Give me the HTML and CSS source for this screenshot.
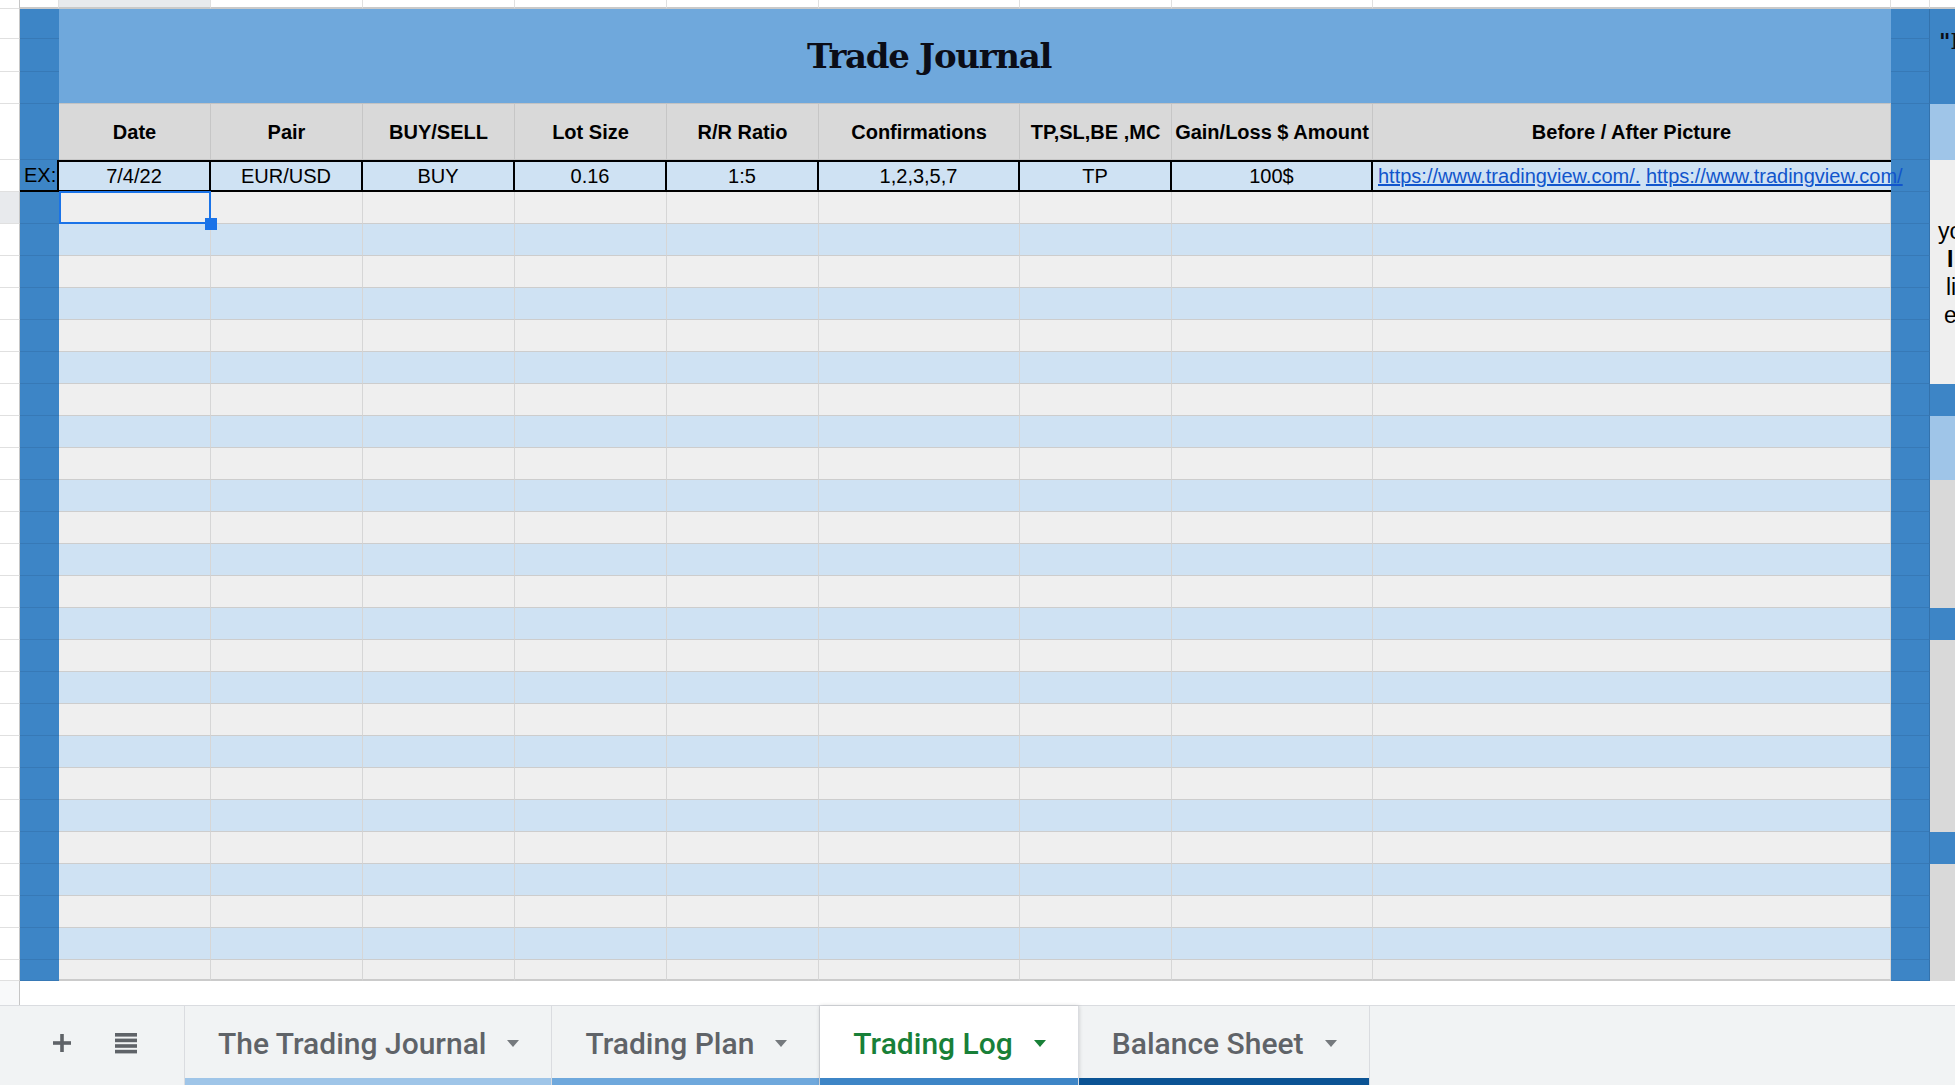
FILE: index.html
```html
<!DOCTYPE html>
<html lang="en">
<head>
<meta charset="utf-8">
<title>Trade Journal</title>
<link rel="stylesheet" href="styles.css">
</head>
<body>
<div class="sheet">
  <div class="main">
    <div class="row top"><div class="s"></div><div></div><div class="colsel"></div><div></div><div></div><div></div><div></div><div></div><div></div><div></div><div></div><div></div></div>

    <div class="row title">
      <div class="s"></div><div class="bl"></div><div class="tt">Trade Journal</div><div class="bl br"></div>
      <div class="s"></div><div class="bl"></div><div class="bl br"></div>
      <div class="s"></div><div class="bl"></div><div class="bl br"></div>
    </div>

    <div class="row head">
      <div class="s"></div><div class="bl"></div>
      <div class="h">Date</div><div class="h">Pair</div><div class="h">BUY/SELL</div><div class="h">Lot Size</div><div class="h">R/R Ratio</div><div class="h">Confirmations</div><div class="h">TP,SL,BE ,MC</div><div class="h">Gain/Loss $ Amount</div><div class="h">Before / After Picture</div>
      <div class="bl br"></div>
    </div>

    <div class="row ex">
      <div class="s"></div><div class="bl lbl">EX:</div>
      <div class="d">7/4/22</div><div class="d">EUR/USD</div><div class="d">BUY</div><div class="d">0.16</div><div class="d">1:5</div><div class="d">1,2,3,5,7</div><div class="d">TP</div><div class="d">100$</div>
      <div class="d link"><a href="#">https://www.tradingview.com/.</a>&nbsp;<a href="#">https://www.tradingview.com/</a></div>
      <div class="bl br"></div>
    </div>

    <div class="row r g"><div class="s on"></div><div class="bl"></div><div class="cur"><span class="selbox"></span><span class="handle"></span></div><div></div><div></div><div></div><div></div><div></div><div></div><div></div><div></div><div class="bl br"></div></div>
    <div class="row r b"><div class="s"></div><div class="bl"></div><div></div><div></div><div></div><div></div><div></div><div></div><div></div><div></div><div></div><div class="bl br"></div></div>
    <div class="row r g"><div class="s"></div><div class="bl"></div><div></div><div></div><div></div><div></div><div></div><div></div><div></div><div></div><div></div><div class="bl br"></div></div>
    <div class="row r b"><div class="s"></div><div class="bl"></div><div></div><div></div><div></div><div></div><div></div><div></div><div></div><div></div><div></div><div class="bl br"></div></div>
    <div class="row r g"><div class="s"></div><div class="bl"></div><div></div><div></div><div></div><div></div><div></div><div></div><div></div><div></div><div></div><div class="bl br"></div></div>
    <div class="row r b"><div class="s"></div><div class="bl"></div><div></div><div></div><div></div><div></div><div></div><div></div><div></div><div></div><div></div><div class="bl br"></div></div>
    <div class="row r g"><div class="s"></div><div class="bl"></div><div></div><div></div><div></div><div></div><div></div><div></div><div></div><div></div><div></div><div class="bl br"></div></div>
    <div class="row r b"><div class="s"></div><div class="bl"></div><div></div><div></div><div></div><div></div><div></div><div></div><div></div><div></div><div></div><div class="bl br"></div></div>
    <div class="row r g"><div class="s"></div><div class="bl"></div><div></div><div></div><div></div><div></div><div></div><div></div><div></div><div></div><div></div><div class="bl br"></div></div>
    <div class="row r b"><div class="s"></div><div class="bl"></div><div></div><div></div><div></div><div></div><div></div><div></div><div></div><div></div><div></div><div class="bl br"></div></div>
    <div class="row r g"><div class="s"></div><div class="bl"></div><div></div><div></div><div></div><div></div><div></div><div></div><div></div><div></div><div></div><div class="bl br"></div></div>
    <div class="row r b"><div class="s"></div><div class="bl"></div><div></div><div></div><div></div><div></div><div></div><div></div><div></div><div></div><div></div><div class="bl br"></div></div>
    <div class="row r g"><div class="s"></div><div class="bl"></div><div></div><div></div><div></div><div></div><div></div><div></div><div></div><div></div><div></div><div class="bl br"></div></div>
    <div class="row r b"><div class="s"></div><div class="bl"></div><div></div><div></div><div></div><div></div><div></div><div></div><div></div><div></div><div></div><div class="bl br"></div></div>
    <div class="row r g"><div class="s"></div><div class="bl"></div><div></div><div></div><div></div><div></div><div></div><div></div><div></div><div></div><div></div><div class="bl br"></div></div>
    <div class="row r b"><div class="s"></div><div class="bl"></div><div></div><div></div><div></div><div></div><div></div><div></div><div></div><div></div><div></div><div class="bl br"></div></div>
    <div class="row r g"><div class="s"></div><div class="bl"></div><div></div><div></div><div></div><div></div><div></div><div></div><div></div><div></div><div></div><div class="bl br"></div></div>
    <div class="row r b"><div class="s"></div><div class="bl"></div><div></div><div></div><div></div><div></div><div></div><div></div><div></div><div></div><div></div><div class="bl br"></div></div>
    <div class="row r g"><div class="s"></div><div class="bl"></div><div></div><div></div><div></div><div></div><div></div><div></div><div></div><div></div><div></div><div class="bl br"></div></div>
    <div class="row r b"><div class="s"></div><div class="bl"></div><div></div><div></div><div></div><div></div><div></div><div></div><div></div><div></div><div></div><div class="bl br"></div></div>
    <div class="row r g"><div class="s"></div><div class="bl"></div><div></div><div></div><div></div><div></div><div></div><div></div><div></div><div></div><div></div><div class="bl br"></div></div>
    <div class="row r b"><div class="s"></div><div class="bl"></div><div></div><div></div><div></div><div></div><div></div><div></div><div></div><div></div><div></div><div class="bl br"></div></div>
    <div class="row r g"><div class="s"></div><div class="bl"></div><div></div><div></div><div></div><div></div><div></div><div></div><div></div><div></div><div></div><div class="bl br"></div></div>
    <div class="row r b"><div class="s"></div><div class="bl"></div><div></div><div></div><div></div><div></div><div></div><div></div><div></div><div></div><div></div><div class="bl br"></div></div>
    <div class="row last g"><div class="s"></div><div class="bl"></div><div></div><div></div><div></div><div></div><div></div><div></div><div></div><div></div><div></div><div class="bl br"></div></div>
  </div>

  <div class="side">
    <div class="sd-top"></div>
    <div class="sd-title">"I</div>
    <div class="sd-lb sd-h56"></div>
    <div class="sd-note">
      <div class="n1">you</div>
      <div class="n2">I</div>
      <div class="n3">like</div>
      <div class="n4">every</div>
    </div>
    <div class="sd-blue"></div>
    <div class="sd-lb sd-h64"></div>
    <div class="sd-gray sd-h128"></div>
    <div class="sd-blue"></div>
    <div class="sd-gray sd-h192"></div>
    <div class="sd-blue"></div>
    <div class="sd-gray sd-rest"></div>
  </div>
</div>

<div class="gap"><div class="s"></div></div>

<div class="tabbar">
  <div class="tools">
    <svg class="ico" width="20" height="20" viewBox="0 0 20 20" aria-hidden="true"><rect x="8.2" y="1" width="3.6" height="18" fill="#5f6368"/><rect x="1" y="8.2" width="18" height="3.6" fill="#5f6368"/></svg>
    <svg class="ico" width="22" height="22" viewBox="0 0 22 22" aria-hidden="true"><rect x="0" y="1" width="22" height="3.6" fill="#5f6368"/><rect x="0" y="6.6" width="22" height="3.6" fill="#5f6368"/><rect x="0" y="12.2" width="22" height="3.6" fill="#5f6368"/><rect x="0" y="17.8" width="22" height="3.6" fill="#5f6368"/></svg>
  </div>
  <div class="tab t1"><div class="lab"><span>The Trading Journal</span><i class="arr"></i></div><div class="bar"></div></div>
  <div class="tab t2"><div class="lab"><span>Trading Plan</span><i class="arr"></i></div><div class="bar"></div></div>
  <div class="tab t3 on"><div class="lab"><span>Trading Log</span><i class="arr"></i></div><div class="bar"></div></div>
  <div class="tab t4"><div class="lab"><span>Balance Sheet</span><i class="arr"></i></div><div class="bar"></div></div>
</div>
</body>
</html>
```

FILE: styles.css
```css
* { box-sizing: border-box; }
html, body { margin: 0; padding: 0; }
body {
  width: 1955px;
  height: 1085px;
  overflow: hidden;
  background: #fff;
  font-family: "Liberation Sans", Arial, sans-serif;
  color: #000;
}

.sheet { display: flex; height: 981px; }
.main { width: 1930px; display: flex; flex-direction: column; flex: none; }

.row {
  display: grid;
  grid-template-columns: 20px 39px 152px 152px 152px 152px 152px 201px 152px 201px 518px 39px;
}
.row > div {
  border-right: 1px solid #d6d6d6;
  border-bottom: 1px solid #cdcdcd;
}
.row > .s {
  background: #fff;
  border-right: 1px solid #c6c6c6;
  border-bottom: 1px solid #e0e0e0;
}
.row > .s.on { background: #e8eaed; }
.row > .bl {
  background: #3d85c6;
  border-right: none;
  border-bottom: 1px solid #3779b6;
}
.row > .bl.br { border-right: 1px solid #3372ad; }

/* top strip */
.top { height: 9px; }
.top > div { background: #fff; border-right: 1px solid #e0e0e0; border-bottom: 2px solid #c9c9c9; }
.top > .colsel { background: #e8eaed; }

/* title band */
.title { grid-template-rows: 30px 33px 32px; }
.title > .tt {
  grid-row: 1 / 4;
  grid-column: 3 / 12;
  background: #6fa8dc;
  border-right: none;
  border-bottom: 1px solid #c3c3c3;
  display: flex;
  align-items: center;
  justify-content: center;
  padding: 0 92px 0 0;
  font-family: "DejaVu Serif", "Liberation Serif", serif;
  font-weight: bold;
  font-size: 34px;
  letter-spacing: -1.3px;
  color: #0b0d17;
}

/* header row */
.head { height: 56px; }
.head > .h {
  background: #d9d9d9;
  border-right: 1px solid #c6c6c6;
  border-bottom: 1px solid #c6c6c6;
  display: flex;
  align-items: center;
  justify-content: center;
  padding-top: 2px;
  font-weight: bold;
  font-size: 20px;
  white-space: nowrap;
}

/* example row */
.ex { height: 32px; }
.ex > .lbl {
  border-right: 2px solid #000;
  border-bottom: 2px solid #000;
  display: flex;
  align-items: center;
  padding: 1px 0 0 4px;
  font-size: 20px;
  white-space: nowrap;
}
.ex > .s { border-bottom: 1px solid #e0e0e0; }
.ex > .d {
  background: #cfe2f3;
  border-top: 2px solid #000;
  border-bottom: 2px solid #000;
  border-right: 2px solid #000;
  display: flex;
  align-items: center;
  justify-content: center;
  padding-top: 1px;
  font-size: 20px;
  white-space: nowrap;
}
.ex > .d.link {
  justify-content: flex-start;
  padding-left: 5px;
  border-right: none;
  position: relative;
  z-index: 1;
}
.link a { color: #1155cc; text-decoration: underline; }

/* body rows */
.r { height: 32px; }
.last { height: 21px; }
.last > div { border-bottom: 2px solid #cbcbcb; }
.g > div { background: #efefef; }
.b > div { background: #cfe2f3; }

/* active cell */
.row > .cur { position: relative; z-index: 2; }
.selbox {
  position: absolute;
  top: -1px;
  left: 0;
  right: -1px;
  bottom: -1px;
  border: 2px solid #1a73e8;
}
.handle {
  position: absolute;
  right: -7px;
  bottom: -7px;
  width: 12px;
  height: 12px;
  background: #1a73e8;
}

/* partially visible column on the right */
.side {
  width: 25px;
  flex: none;
  display: flex;
  flex-direction: column;
  overflow: hidden;
  white-space: nowrap;
}
.sd-top { height: 9px; border-bottom: 2px solid #c9c9c9; }
.sd-title {
  height: 95px;
  background: #3d85c6;
  padding: 19px 0 0 9px;
  font-family: "DejaVu Serif", "Liberation Serif", serif;
  font-weight: bold;
  font-size: 22px;
  color: #0b0d17;
}
.sd-lb { background: #9fc5e8; }
.sd-h56 { height: 56px; }
.sd-h64 { height: 64px; }
.sd-note {
  height: 224px;
  background: #efefef;
  padding-top: 57px;
  font-size: 23px;
  line-height: 28px;
}
.n1 { padding-left: 8px; }
.n2 { padding-left: 17px; font-weight: bold; }
.n3 { padding-left: 16px; }
.n4 { padding-left: 14px; }
.sd-blue { height: 32px; background: #3d85c6; }
.sd-gray { background: #d9d9d9; }
.sd-h128 { height: 128px; }
.sd-h192 { height: 192px; }
.sd-rest { flex: 1; }

/* gap under the grid */
.gap { height: 24px; display: flex; }
.gap > .s { width: 20px; background: #f8f9fa; border-right: 1px solid #c6c6c6; }

/* sheet tabs */
.tabbar {
  height: 80px;
  display: flex;
  background: #f1f3f4;
  border-top: 1px solid #dadce0;
}
.tools {
  width: 184px;
  flex: none;
  display: flex;
  align-items: center;
  gap: 43px;
  padding: 0 0 5px 52px;
}
.ico { display: block; }
.tab {
  display: flex;
  flex-direction: column;
  border-right: 1px solid #dadce0;
}
.tab.t1 { border-left: 1px solid #dadce0; }
.tab .lab {
  flex: 1;
  display: flex;
  align-items: center;
  gap: 21px;
  padding: 3px 32px 0 33px;
  font-family: Roboto, "Noto Sans", sans-serif;
  font-weight: 500;
  font-size: 30px;
  color: #5f6368;
  white-space: nowrap;
}
.arr {
  width: 0;
  height: 0;
  border-left: 6px solid transparent;
  border-right: 6px solid transparent;
  border-top: 7px solid #75797d;
}
.tab .bar { height: 7px; }
.t1 .bar { background: #9fc5e8; }
.t2 .bar { background: #6fa8dc; }
.t3 .bar { background: #3d85c6; }
.t4 .bar { background: #0b5394; }
.tab.on { background: #fff; box-shadow: 0 0 4px rgba(0,0,0,0.18); }
.tab.on .lab { color: #188038; }
.tab.on .arr { border-top-color: #188038; }
```
